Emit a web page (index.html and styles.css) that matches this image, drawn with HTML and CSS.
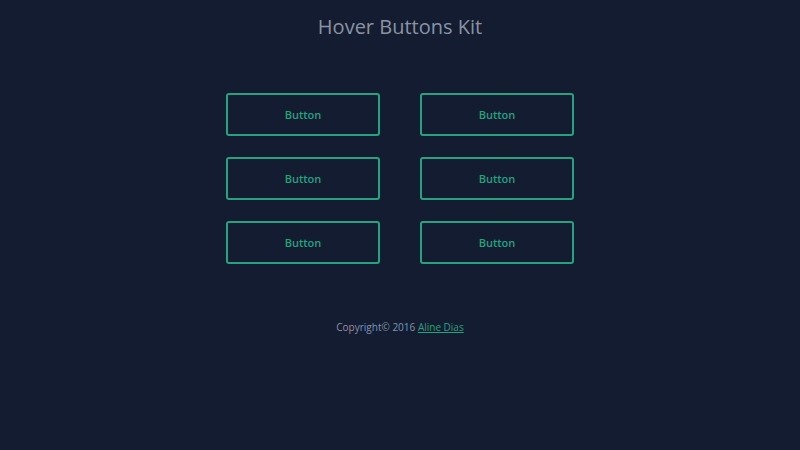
FILE: index.html
```html
<!DOCTYPE html>
<html lang="en">
<head>
  <meta charset="UTF-8">
  <title>Hover Buttons Kit</title>
  <link rel="stylesheet" href="styles.css">
</head>
<body>

  <!-- Header -->
  <header>
    <h1>Hover Buttons Kit</h1>
  </header>

  <!-- Buttons grid -->
  <main class="buttons">
    <a href="#" class="btn">Button</a>
    <a href="#" class="btn">Button</a>
    <a href="#" class="btn">Button</a>
    <a href="#" class="btn">Button</a>
    <a href="#" class="btn">Button</a>
    <a href="#" class="btn">Button</a>
  </main>

  <!-- Footer -->
  <footer>
    <p>Copyright&copy; 2016 <a href="#">Aline Dias</a></p>
  </footer>

</body>
</html>
```

FILE: styles.css
```css
* {
  margin: 0;
  padding: 0;
  box-sizing: border-box;
}

body {
  font-family: "Open Sans", Arial, sans-serif;
  background-color: #141c31;
  color: #8a93a3;
}

header {
  text-align: center;
  padding-top: 12px;
}

header h1 {
  font-size: 20px;
  font-weight: normal;
  line-height: 30px;
}

.buttons {
  display: grid;
  grid-template-columns: 154px 154px;
  column-gap: 40px;
  row-gap: 21px;
  justify-content: center;
  margin-top: 51px;
}

.btn {
  display: flex;
  align-items: center;
  justify-content: center;
  height: 43px;
  border: 2px solid #27a27c;
  border-radius: 3px;
  color: #27a27c;
  font-size: 11px;
  font-weight: 600;
  text-decoration: none;
  transition: background-color 0.3s ease, color 0.3s ease;
}

.btn:hover {
  background-color: #27a27c;
  color: #141c31;
}

footer {
  text-align: center;
  margin-top: 56px;
  font-size: 10px;
}

footer a {
  color: #27a27c;
}
```
